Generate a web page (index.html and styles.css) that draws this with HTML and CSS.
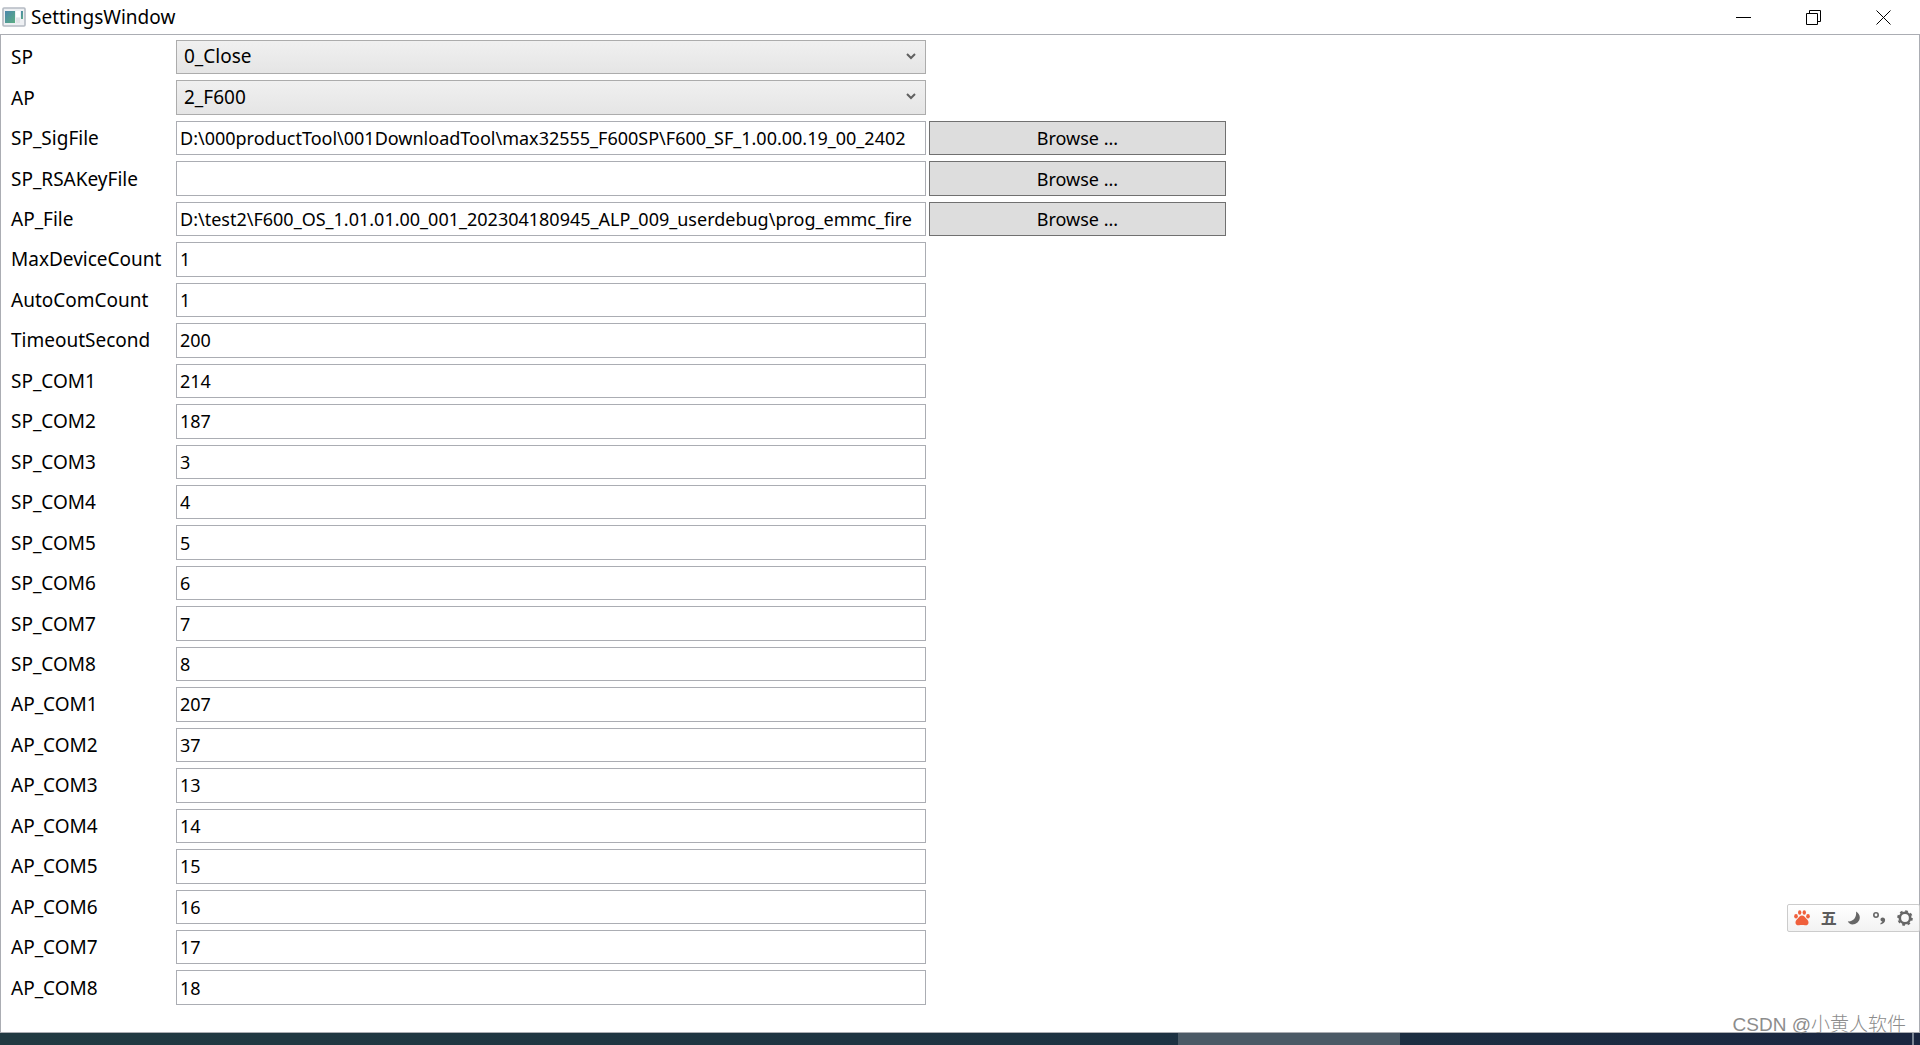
FILE: index.html
```
<!DOCTYPE html>
<html lang="en">
<head>
<meta charset="utf-8">
<meta name="viewport" content="width=device-width, initial-scale=1">
<title>SettingsWindow</title>
<link rel="stylesheet" href="styles.css">
</head>
<body>
<header class="titlebar">
  <svg class="app-icon" width="24" height="20" viewBox="0 0 24 20" aria-hidden="true">
    <defs><linearGradient id="pane" x1="0" y1="0" x2="1" y2="1"><stop offset="0" stop-color="#4a86ac"/><stop offset="1" stop-color="#5cae82"/></linearGradient></defs>
    <rect x="1" y="1" width="22" height="18" rx="1" fill="#eef0f3" stroke="#b5bbc3" stroke-width="1.6"/>
    <rect x="3" y="4" width="10" height="12" fill="url(#pane)"/>
    <rect x="14" y="4" width="4" height="6" fill="#fff"/>
    <rect x="19" y="4" width="2" height="8" fill="url(#pane)"/>
    <rect x="14" y="11" width="4" height="5" fill="#e2e4e8"/>
  </svg>
  <h1 class="title">SettingsWindow</h1>
  <div class="window-buttons">
    <button type="button" class="window-button" aria-label="Minimize"><svg width="15" height="15" viewBox="0 0 15 15"><path d="M0 7.5h15"/></svg></button>
    <button type="button" class="window-button" aria-label="Restore"><svg width="15" height="15" viewBox="0 0 15 15"><path d="M.5 3.5h11v11H.5zM3.500 3.500V.5h11v11h-3"/></svg></button>
    <button type="button" class="window-button" aria-label="Close"><svg width="15" height="15" viewBox="0 0 15 15"><path d="M.5.5l14 14M14.500.5l-14 14"/></svg></button>
  </div>
</header>
<main class="client">
  <form class="settings">
    <div class="row"><label for="sp">SP</label><div class="combo"><select id="sp"><option>0_Close</option></select><svg class="chevron" width="10" height="7" viewBox="0 0 10 7" aria-hidden="true"><path d="M1 1l4 4 4-4"/></svg></div></div>
    <div class="row"><label for="ap">AP</label><div class="combo"><select id="ap"><option>2_F600</option></select><svg class="chevron" width="10" height="7" viewBox="0 0 10 7" aria-hidden="true"><path d="M1 1l4 4 4-4"/></svg></div></div>
    <div class="row"><label for="sig">SP_SigFile</label><input id="sig" type="text" value="D:\000productTool\001DownloadTool\max32555_F600SP\F600_SF_1.00.00.19_00_2402"><button type="button" class="browse">Browse ...</button></div>
    <div class="row"><label for="rsa">SP_RSAKeyFile</label><input id="rsa" type="text" value=""><button type="button" class="browse">Browse ...</button></div>
    <div class="row"><label for="apfile">AP_File</label><input id="apfile" type="text" value="D:\test2\F600_OS_1.01.01.00_001_202304180945_ALP_009_userdebug\prog_emmc_fire"><button type="button" class="browse">Browse ...</button></div>
    <div class="row"><label for="maxdev">MaxDeviceCount</label><input id="maxdev" type="text" value="1"></div>
    <div class="row"><label for="autocom">AutoComCount</label><input id="autocom" type="text" value="1"></div>
    <div class="row"><label for="timeout">TimeoutSecond</label><input id="timeout" type="text" value="200"></div>
    <div class="row"><label for="sp1">SP_COM1</label><input id="sp1" type="text" value="214"></div>
    <div class="row"><label for="sp2">SP_COM2</label><input id="sp2" type="text" value="187"></div>
    <div class="row"><label for="sp3">SP_COM3</label><input id="sp3" type="text" value="3"></div>
    <div class="row"><label for="sp4">SP_COM4</label><input id="sp4" type="text" value="4"></div>
    <div class="row"><label for="sp5">SP_COM5</label><input id="sp5" type="text" value="5"></div>
    <div class="row"><label for="sp6">SP_COM6</label><input id="sp6" type="text" value="6"></div>
    <div class="row"><label for="sp7">SP_COM7</label><input id="sp7" type="text" value="7"></div>
    <div class="row"><label for="sp8">SP_COM8</label><input id="sp8" type="text" value="8"></div>
    <div class="row"><label for="ap1">AP_COM1</label><input id="ap1" type="text" value="207"></div>
    <div class="row"><label for="ap2">AP_COM2</label><input id="ap2" type="text" value="37"></div>
    <div class="row"><label for="ap3">AP_COM3</label><input id="ap3" type="text" value="13"></div>
    <div class="row"><label for="ap4">AP_COM4</label><input id="ap4" type="text" value="14"></div>
    <div class="row"><label for="ap5">AP_COM5</label><input id="ap5" type="text" value="15"></div>
    <div class="row"><label for="ap6">AP_COM6</label><input id="ap6" type="text" value="16"></div>
    <div class="row"><label for="ap7">AP_COM7</label><input id="ap7" type="text" value="17"></div>
    <div class="row"><label for="ap8">AP_COM8</label><input id="ap8" type="text" value="18"></div>
  </form>
</main>
<footer class="taskbar"><span class="task"></span><span class="desktop-edge"></span></footer>
<div class="ime">
  <svg width="16" height="16" viewBox="0 0 16 16" fill="#f0603c" aria-hidden="true"><ellipse cx="2" cy="6.200" rx="1.800" ry="2.200"/><ellipse cx="5.700" cy="2.500" rx="1.700" ry="2.200"/><ellipse cx="10.300" cy="2.500" rx="1.700" ry="2.200"/><ellipse cx="14" cy="6.200" rx="1.800" ry="2.200"/><path d="M8 5.500c2 0 3 1.600 4.200 3 1.300 1.400 2.600 2.500 2.300 4.500-.3 2-1.800 2.500-3.500 2.300-2-.3-4-.3-6 0-1.700.2-3.200-.3-3.500-2.300-.3-2 1-3.100 2.300-4.500C5 7.100 6 5.500 8 5.500z"/></svg>
  <span class="ime-mode">五</span>
  <svg width="14" height="14" viewBox="0 0 14 14" fill="#666" aria-hidden="true"><path d="M9 .5c4.500 2.500 5 8 1.500 11C7 14.500 2 14 .8 10.300 5.500 11 10 7 9 .5z"/></svg>
  <svg width="14" height="14" viewBox="0 0 14 14" fill="#666" aria-hidden="true"><circle cx="4" cy="4" r="2.200" fill="none" stroke="#666" stroke-width="1.600"/><path d="M10.500 6.500c4 0 3.500 6-2 7v-1.600c1.200-.3 1.700-.8 1.800-1.400-2.500-.2-2.400-4 .2-4z"/></svg>
  <svg width="16" height="16" viewBox="0 0 16 16" fill="none" stroke="#666" aria-hidden="true"><circle cx="8" cy="8" r="5.200" stroke-width="2.600"/><circle cx="8" cy="8" r="6.900" stroke-width="1.800" stroke-dasharray="2.710 2.710"/></svg>
</div>
<div class="watermark">CSDN @小黄人软件</div>
</body>
</html>
```
FILE: styles.css
```
* {
  box-sizing: border-box;
}

body {
  margin: 0;
  min-height: 100vh;
  display: flex;
  flex-direction: column;
  position: relative;
  background: #fff;
  color: #000;
  font: 19px/24px "Noto Sans", "Noto Sans CJK SC", sans-serif;
}

.titlebar {
  display: flex;
  align-items: center;
  height: 34px;
  padding: 0 2px;
  gap: 5px;
}

.title {
  flex: 1;
  margin: 0;
  font-size: 19px;
  font-weight: 400;
}

.window-buttons {
  display: flex;
}

.window-button {
  display: flex;
  align-items: center;
  justify-content: center;
  width: 70px;
  height: 32px;
  padding: 0;
  border: 0;
  background: none;
}

.window-button svg {
  fill: none;
  stroke: #000;
}

.client {
  flex: 1;
  display: flex;
  border: 1px solid #abadb3;
  padding: 2px 0 24px 10px;
}

.settings {
  flex: 1;
  display: flex;
  flex-direction: column;
}

.row {
  flex: 1;
  display: grid;
  grid-template-columns: 162px 750fr 297fr 690fr;
  column-gap: 3px;
  padding: 3px 0;
}

.row label {
  align-self: center;
}

.row input,
.row select,
.browse {
  width: 100%;
  min-width: 0;
  min-height: 30px;
  margin: 0;
  border: 1px solid #abadb3;
  border-radius: 0;
  color: #000;
  font: inherit;
}

.row input {
  padding: 0 0 0 3px;
  background: #fff;
  font-size: 18px;
}

.combo {
  display: grid;
}

.combo > * {
  grid-area: 1 / 1;
}

.row select {
  appearance: none;
  padding: 0 30px 2px 7px;
  border-color: #acacac;
  background: linear-gradient(#f0f0f0, #e5e5e5);
}

.chevron {
  place-self: center end;
  margin: 0 10px 2px 0;
  fill: none;
  stroke: #606060;
  stroke-width: 2;
  pointer-events: none;
}

.row .browse {
  padding: 0;
  border-color: #707070;
  background: #ddd;
  font-size: 18px;
}

.taskbar {
  display: grid;
  grid-template-columns: 1178fr 222fr 512fr 2px 6px;
  height: 12px;
  background: linear-gradient(90deg, #213a42, #1d3242 60%, #1a2640);
}

.task {
  grid-column: 2;
  background: #4b5a66;
}

.desktop-edge {
  grid-column: 4;
  background: #7b8594;
}

.ime {
  position: absolute;
  right: 0;
  bottom: 113px;
  display: flex;
  align-items: center;
  justify-content: space-between;
  width: 133px;
  height: 28px;
  padding: 0 6px;
  border: 1px solid #ccc;
  border-radius: 2px;
  background: linear-gradient(#fff, #f2f2f2);
}

.ime-mode {
  padding-bottom: 3px;
  color: #5c5c5c;
  font: 700 16px/20px "Noto Sans CJK SC", sans-serif;
}

.watermark {
  position: absolute;
  right: 14px;
  bottom: 8px;
  color: #8c8c8c;
  font: 300 19px/24px "Liberation Sans", "Noto Sans CJK SC", sans-serif;
}
```
